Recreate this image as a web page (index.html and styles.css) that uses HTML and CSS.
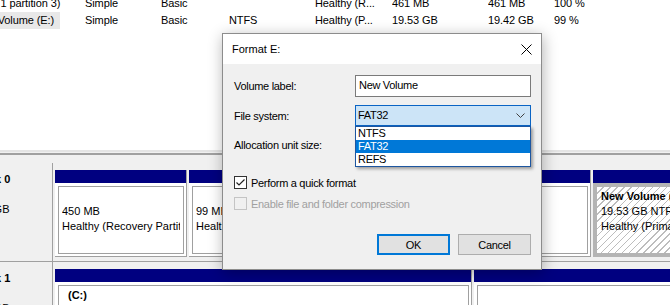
FILE: index.html
```html
<!DOCTYPE html>
<html lang="en">
<head>
<meta charset="utf-8">
<title>Disk Management - Format E:</title>
<link rel="stylesheet" href="styles.css">
</head>
<body>
<div class="window">
  <div class="list">
    <div class="rows">
      <div class="row">
        <div class="c">(Disk 1 partition 3)</div>
        <div class="c">Simple</div>
        <div class="c">Basic</div>
        <div class="c"></div>
        <div class="c">Healthy (R...</div>
        <div class="c">461 MB</div>
        <div class="c">461 MB</div>
        <div class="c">100 %</div>
      </div>
      <div class="row">
        <div class="c"><span class="sel">New Volume (E:)</span></div>
        <div class="c">Simple</div>
        <div class="c">Basic</div>
        <div class="c">NTFS</div>
        <div class="c">Healthy (P...</div>
        <div class="c">19.53 GB</div>
        <div class="c">19.42 GB</div>
        <div class="c">99 %</div>
      </div>
    </div>
  </div>

  <div class="splitter"><div class="split-line"></div></div>

  <div class="disk">
    <div class="dlabel">
      <div class="dname">Disk 0</div>
      <div class="dtype">Basic</div>
      <div class="dsize">60.00 GB</div>
      <div class="dstate">Online</div>
    </div>
    <div class="dmap">
      <div class="parts">
        <div class="part w-recovery">
          <div class="bar"></div>
          <div class="pbody">
            <div class="pl">&nbsp;</div>
            <div class="pl">450 MB</div>
            <div class="pl">Healthy (Recovery Partition)</div>
          </div>
        </div>
        <div class="part w-efi">
          <div class="bar"></div>
          <div class="pbody">
            <div class="pl">&nbsp;</div>
            <div class="pl">99 MB</div>
            <div class="pl">Healthy (EFI System Partition)</div>
          </div>
        </div>
        <div class="part grow selected">
          <div class="bar"></div>
          <div class="pbody">
            <div class="pl bold">New Volume (E:)</div>
            <div class="pl">19.53 GB NTFS</div>
            <div class="pl">Healthy (Primary Partition)</div>
          </div>
        </div>
      </div>
    </div>
  </div>

  <div class="disk">
    <div class="dlabel">
      <div class="dname">Disk 1</div>
      <div class="dtype">Basic</div>
      <div class="dsize">60.00 GB</div>
      <div class="dstate">Online</div>
    </div>
    <div class="dmap">
      <div class="parts">
        <div class="part w-c">
          <div class="bar"></div>
          <div class="pbody">
            <div class="pl bold indent">(C:)</div>
            <div class="pl indent">39.51 GB NTFS</div>
            <div class="pl indent">Healthy (Boot, Page File, Crash Dump, Primary Partition)</div>
          </div>
        </div>
        <div class="part grow">
          <div class="bar"></div>
          <div class="pbody">
            <div class="pl">&nbsp;</div>
            <div class="pl">461 MB</div>
            <div class="pl">Healthy (Recovery Partition)</div>
          </div>
        </div>
      </div>
    </div>
  </div>
</div>

<div class="dialog">
  <div class="titlebar">
    <span class="title">Format E:</span>
    <svg class="close" width="11" height="11" viewBox="0 0 11 11" aria-hidden="true">
      <path d="M0.5 0.5 L10.5 10.5 M10.5 0.5 L0.5 10.5" stroke="#000" stroke-width="1" fill="none"/>
    </svg>
  </div>
  <div class="dbody">
    <div class="field">
      <span class="lbl">Volume label:</span>
      <div class="textbox">New Volume</div>
    </div>
    <div class="field">
      <span class="lbl">File system:</span>
      <div class="combo open">
        <span>FAT32</span>
        <svg class="chev" width="9" height="5" viewBox="0 0 9 5" aria-hidden="true">
          <path d="M0.5 0.5 L4.5 4.5 L8.5 0.5" stroke="#404040" stroke-width="1" fill="none"/>
        </svg>
        <ul class="droplist">
          <li>NTFS</li>
          <li class="hi">FAT32</li>
          <li>REFS</li>
        </ul>
      </div>
    </div>
    <div class="field">
      <span class="lbl">Allocation unit size:</span>
      <div class="combo"></div>
    </div>
    <div class="check first">
      <span class="box">
        <svg width="11" height="11" viewBox="0 0 11 11" aria-hidden="true">
          <path d="M1.5 5.5 L4 8 L9.5 2.5" stroke="#222" stroke-width="1.2" fill="none"/>
        </svg>
      </span>
      <span>Perform a quick format</span>
    </div>
    <div class="check disabled">
      <span class="box"></span>
      <span>Enable file and folder compression</span>
    </div>
    <div class="buttons">
      <button class="btn default">OK</button>
      <button class="btn">Cancel</button>
    </div>
  </div>
</div>
</body>
</html>
```

FILE: styles.css
```css
* { box-sizing: border-box; }

html, body { margin: 0; padding: 0; }

body {
  width: 670px;
  height: 305px;
  overflow: hidden;
  position: relative;
  background: #fff;
  color: #000;
  font-family: "Liberation Sans", Arial, sans-serif;
  font-size: 11px;
}

.window { width: 720px; }

/* ---- volume list ---- */
.list {
  height: 150px;
  background: #fff;
  overflow: hidden;
}
.rows { margin: -5px 0 0 -27px; }
.row {
  display: grid;
  grid-template-columns: 112px 76px 68px 86px 77px 96px 66px 80px;
  height: 17px;
  line-height: 17px;
  white-space: nowrap;
  letter-spacing: -0.1px;
}
.c { overflow: hidden; }
.sel {
  display: inline-block;
  height: 17px;
  background: #e8e8e8;
  padding-right: 6px;
}

/* ---- splitter ---- */
.splitter {
  height: 13px;
  background: #f0f0f0;
  border-top: 2px solid #e4e4e4;
  padding-top: 1px;
}
.split-line { height: 2px; background: #a0a0a0; }

/* ---- disk rows ---- */
.disk {
  display: flex;
  height: 99px;
  background: #f0f0f0;
}
.dlabel {
  width: 53px;
  flex: none;
  border-right: 1px solid #a0a0a0;
  border-bottom: 1px solid #a0a0a0;
  padding-top: 9px;
  line-height: 15px;
  white-space: nowrap;
  overflow: hidden;
}
.dname { font-weight: bold; margin-left: -22px; }
.dtype { margin-left: -32px; }
.dsize { margin-left: -37px; }
.dstate { margin-left: -40px; }

.dmap {
  flex: 1;
  padding: 7px 0 0 2px;
  border-bottom: 1px solid #a0a0a0;
}
.parts {
  display: flex;
  gap: 2px;
  height: 87px;
}
.part {
  display: flex;
  flex-direction: column;
  background: #fff;
  border-right: 1px solid #a0a0a0;
  border-bottom: 1px solid #a0a0a0;
  min-width: 0;
}
.w-recovery { width: 132px; }
.w-efi { width: 402px; }
.w-c { width: 417px; }
.grow { flex: 1; }

.bar { height: 13px; flex: none; background: #000080; }
.pbody {
  flex: 1;
  margin: 3px 2px 2px 3px;
  border: 1px solid #a0a0a0;
  padding: 2px 3px 0;
  line-height: 15px;
  overflow: hidden;
  white-space: nowrap;
}
.pl { overflow: hidden; }
.bold { font-weight: bold; }
.indent { padding-left: 6px; }

.part.selected { border: none; }
.part.selected .pbody {
  margin: 0;
  border: 4px solid #b4b4b4;
  padding: 2px 4px 0;
  background: repeating-linear-gradient(135deg, #fff 0 4px, #bdbdbd 4px 5px);
}

/* ---- dialog ---- */
.dialog {
  position: absolute;
  left: 222px;
  top: 33px;
  width: 320px;
  height: 237px;
  border: 1px solid #8c8c8c;
  background: #f0f0f0;
  box-shadow: 1px 3px 14px rgba(0, 0, 0, 0.3);
  letter-spacing: -0.3px;
  z-index: 5;
}
.titlebar {
  height: 30px;
  background: #fff;
  display: flex;
  align-items: center;
  justify-content: space-between;
  padding: 0 9px;
  letter-spacing: 0;
}
.close { display: block; }

.dbody { padding: 11px 9px 0 11px; }

.field {
  display: grid;
  grid-template-columns: 121px 176px;
  align-items: center;
  margin-bottom: 8px;
}
.textbox {
  height: 22px;
  border: 1px solid #7a7a7a;
  background: #fff;
  padding-left: 3px;
  line-height: 19px;
  white-space: nowrap;
}
.combo {
  position: relative;
  height: 21px;
  border: 1px solid #adadad;
  background: #e1e1e1;
  padding-left: 2px;
  line-height: 19px;
  white-space: nowrap;
}
.combo.open {
  border-color: #0a64c4;
  background: #cce4f7;
}
.chev {
  position: absolute;
  right: 5px;
  top: 7px;
}
.droplist {
  position: absolute;
  left: -1px;
  top: 20px;
  width: 176px;
  margin: 0;
  padding: 0;
  list-style: none;
  background: #fff;
  border: 1px solid #1d56a0;
  box-shadow: 2px 2px 3px rgba(0, 0, 0, 0.35);
  z-index: 3;
}
.droplist li {
  height: 13px;
  line-height: 13px;
  padding-left: 2px;
}
.droplist li.hi { background: #0078d7; color: #fff; }

.check {
  display: flex;
  align-items: center;
  gap: 4px;
  height: 13px;
  margin-bottom: 8px;
  white-space: nowrap;
}
.check.first { margin-top: 21px; }
.box {
  width: 13px;
  height: 13px;
  flex: none;
  border: 1px solid #333;
  background: #fff;
  display: flex;
  align-items: center;
  justify-content: center;
}
.box svg { display: block; }
.check.disabled { color: #a0a0a0; }
.check.disabled .box { border-color: #c4c4c4; background: #f0f0f0; }

.buttons {
  display: flex;
  justify-content: flex-end;
  gap: 8px;
  margin-top: 24px;
  margin-right: 1px;
}
.btn {
  width: 73px;
  height: 21px;
  padding: 0;
  border: 1px solid #adadad;
  background: #e1e1e1;
  color: #000;
  font: inherit;
  letter-spacing: inherit;
}
.btn.default { border: 2px solid #0078d7; }
```
